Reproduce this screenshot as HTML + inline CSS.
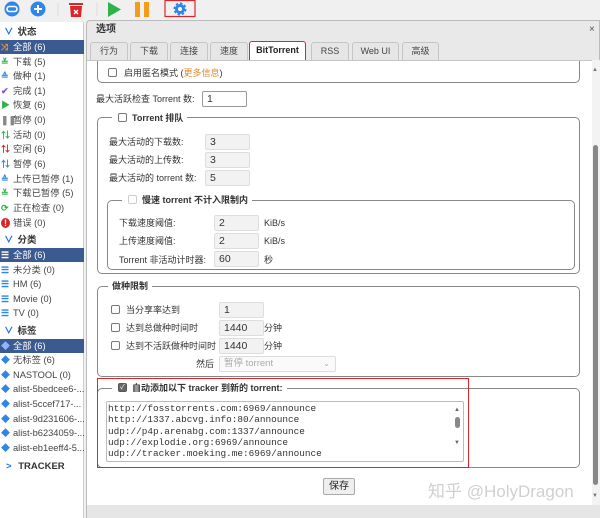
<!DOCTYPE html>
<html><head><meta charset="utf-8"><style>
*{box-sizing:border-box;margin:0;padding:0}
body{width:600px;height:518px;overflow:hidden;background:#f0f0f0;font-family:"Liberation Sans","Noto Sans CJK SC",sans-serif;font-size:9px;line-height:12px;color:#333;position:relative}
.a{position:absolute;white-space:nowrap;line-height:12px}
.sb{position:absolute;left:0;top:22px;width:84px;height:496px;background:#fff;border-right:1px solid #ccc}
.it{position:absolute;left:0;width:84px;height:14px;line-height:14px;padding-left:13px;font-size:9.3px;color:#444;overflow:hidden;white-space:nowrap}
.it.sel{background:#3b5a8f;color:#fff}
.it i{position:absolute;left:1px;top:2px;width:9px;height:10px;font-style:normal;font-size:9px;line-height:10px;font-weight:bold}
.hd{position:absolute;left:4px;font-weight:bold;font-size:9.5px;line-height:12px;color:#333}
.hd b{color:#1a73e8;margin-right:4px}
.tab{position:absolute;top:42px;height:18px;background:#e6e6e6;border:1px solid #c5c5c5;border-bottom:none;border-radius:3px 3px 0 0;text-align:center;line-height:17px;font-size:9px;color:#444}
fieldset.f{position:absolute;border:1px solid #888;border-radius:5px}
.cb{position:absolute;width:9px;height:9px;border:1px solid #777;border-radius:2px;background:#fff}
.in{position:absolute;height:16px;background:#f2f2f2;border:1px solid #ddd;border-radius:2px;padding-left:4px;line-height:14px;font-size:10.5px;color:#333;white-space:nowrap}
.lg{position:absolute;background:#fff;padding:0 4px;font-weight:bold;font-size:9px;line-height:12px;color:#333;white-space:nowrap}
</style></head><body>
<svg class="a" style="left:0;top:0" width="200" height="20">
<circle cx="12" cy="9" r="7.5" fill="#2f86e8"/><rect x="7" y="6.5" width="10" height="5" rx="2.5" fill="none" stroke="#fff" stroke-width="1.6"/>
<circle cx="38" cy="9" r="7.5" fill="#2f86e8"/><path d="M38 5v8M34 9h8" stroke="#fff" stroke-width="2"/>
<line x1="58" y1="3" x2="58" y2="16" stroke="#ddd"/>
<rect x="69" y="3" width="14" height="2" fill="#d9262b"/><path d="M70 6h12l-1 11h-10z" fill="#d9262b"/><path d="M74 10l4 4M78 10l-4 4" stroke="#fff" stroke-width="1.3"/>
<line x1="97" y1="3" x2="97" y2="16" stroke="#ddd"/>
<path d="M108 2l13 7.5-13 7.5z" fill="#2eb34a"/>
<rect x="135" y="2" width="5" height="15" fill="#f59a19"/><rect x="144" y="2" width="5" height="15" fill="#f59a19"/>
<rect x="165" y="0.5" width="30" height="16" fill="none" stroke="#d9262b" stroke-width="1.2"/>
<circle cx="180" cy="9" r="5" fill="#2f86e8" stroke="#2f86e8" stroke-width="3" stroke-dasharray="2.2 1.7"/><circle cx="180" cy="9" r="2" fill="#fff"/>
</svg>
<div class="sb"></div>
<div class="hd" style="top:27px"><b>∨</b>状态</div>
<div class="it sel" style="top:40px"><i style="color:#f59a19">⤨</i>全部 (6)</div>
<div class="it" style="top:55px"><i style="color:#2eb34a">≚</i>下载 (5)</div>
<div class="it" style="top:69px"><i style="color:#2f86e8">≙</i>做种 (1)</div>
<div class="it" style="top:84px"><i style="color:#8a4fd0">✔</i>完成 (1)</div>
<div class="it" style="top:98px"><i style="color:#2eb34a">▶</i>恢复 (6)</div>
<div class="it" style="top:113px"><i style="color:#888">❚❚</i>暂停 (0)</div>
<div class="it" style="top:128px"><i style="color:#2eb34a">⇅</i>活动 (0)</div>
<div class="it" style="top:142px"><i style="color:#d9262b">⇅</i>空闲 (6)</div>
<div class="it" style="top:157px"><i style="color:#2f86e8">⇅</i>暂停 (6)</div>
<div class="it" style="top:172px"><i style="color:#2f86e8">≙</i>上传已暂停 (1)</div>
<div class="it" style="top:186px"><i style="color:#2eb34a">≚</i>下载已暂停 (5)</div>
<div class="it" style="top:201px"><i style="color:#2eb34a">⟳</i>正在检查 (0)</div>
<div class="it" style="top:216px"><i style="color:#fff;background:#d9262b;border-radius:50%;text-align:center">!</i>错误 (0)</div>
<div class="hd" style="top:235px"><b>∨</b>分类</div>
<div class="it sel" style="top:248px"><i style="color:#fff">☰</i>全部 (6)</div>
<div class="it" style="top:263px"><i style="color:#2f86e8">☰</i>未分类 (0)</div>
<div class="it" style="top:277px"><i style="color:#2f86e8">☰</i>HM (6)</div>
<div class="it" style="top:292px"><i style="color:#2f86e8">☰</i>Movie (0)</div>
<div class="it" style="top:306px"><i style="color:#2f86e8">☰</i>TV (0)</div>
<div class="hd" style="top:326px"><b>∨</b>标签</div>
<div class="it sel" style="top:339px"><i style="color:#8fb4ff">◆</i>全部 (6)</div>
<div class="it" style="top:353px"><i style="color:#2f86e8">◆</i>无标签 (6)</div>
<div class="it" style="top:368px"><i style="color:#2f86e8">◆</i>NASTOOL (0)</div>
<div class="it" style="top:382px"><i style="color:#2f86e8">◆</i>alist-5bedcee6-...</div>
<div class="it" style="top:397px"><i style="color:#2f86e8">◆</i>alist-5ccef717-...</div>
<div class="it" style="top:412px"><i style="color:#2f86e8">◆</i>alist-9d231606-...</div>
<div class="it" style="top:426px"><i style="color:#2f86e8">◆</i>alist-b6234059-...</div>
<div class="it" style="top:441px"><i style="color:#2f86e8">◆</i>alist-eb1eeff4-5...</div>
<div class="hd" style="top:461px;left:6px"><b>&gt;</b> TRACKER</div>
<div class="a" style="left:86px;top:20px;width:514px;height:498px;background:#e9e9e9;border:1px solid #bbb;border-radius:4px 0 0 0"></div>
<div class="a" style="left:96px;top:24px;font-weight:bold;font-size:10px">选项</div>
<div class="a" style="left:589px;top:24px;font-size:10px;color:#555">×</div>
<div class="tab" style="left:90px;width:38px">行为</div>
<div class="tab" style="left:130px;width:38px">下载</div>
<div class="tab" style="left:170px;width:38px">连接</div>
<div class="tab" style="left:210px;width:38px">速度</div>
<div class="tab" style="left:249px;width:57px;background:#fff;border:1.5px solid #d9262b;font-weight:bold;color:#222;top:41px;height:20px">BitTorrent</div>
<div class="tab" style="left:311px;width:38px">RSS</div>
<div class="tab" style="left:352px;width:47px">Web UI</div>
<div class="tab" style="left:402px;width:37px">高级</div>
<div class="a" style="left:87px;top:60px;width:505px;height:445px;background:#fff;border-top:1px solid #c5c5c5"></div>
<div class="a" style="left:592px;top:60px;width:8px;height:445px;background:#f3f3f3"></div>
<div class="a" style="left:593px;top:145px;width:5px;height:340px;background:#888;border-radius:3px"></div>
<div class="a" style="left:592px;top:64px;font-size:6px;color:#777">▲</div>
<div class="a" style="left:592px;top:490px;font-size:6px;color:#777">▼</div>
<div class="a" style="left:97px;top:61px;width:483px;height:22px;border:1px solid #888;border-top:none;border-radius:0 0 5px 5px"></div>
<div class="cb" style="left:108px;top:68px"></div>
<div class="a" style="left:124px;top:67px">启用匿名模式 (<span style="color:#e08a2c">更多信息</span>)</div>
<div class="a" style="left:96px;top:93px">最大活跃检查 Torrent 数:</div>
<div class="in" style="left:202px;top:91px;width:45px;background:#fff;border-color:#999">1</div>
<fieldset class="f" style="left:97px;top:117px;width:483px;height:157px"></fieldset>
<div class="lg" style="left:112px;top:112px;padding-left:20px">Torrent 排队</div>
<div class="cb" style="left:118px;top:113px"></div>
<div class="a" style="left:109px;top:136px">最大活动的下载数:</div>
<div class="in" style="left:205px;top:134px;width:45px">3</div>
<div class="a" style="left:109px;top:154px">最大活动的上传数:</div>
<div class="in" style="left:205px;top:152px;width:45px">3</div>
<div class="a" style="left:109px;top:172px">最大活动的 torrent 数:</div>
<div class="in" style="left:205px;top:170px;width:45px">5</div>
<fieldset class="f" style="left:107px;top:200px;width:468px;height:70px"></fieldset>
<div class="lg" style="left:122px;top:194px;padding-left:20px">慢速 torrent 不计入限制内</div>
<div class="cb" style="left:128px;top:195px;border-color:#ccc"></div>
<div class="a" style="left:119px;top:217px">下载速度阈值:</div>
<div class="in" style="left:214px;top:215px;width:45px">2</div>
<div class="a" style="left:264px;top:217px">KiB/s</div>
<div class="a" style="left:119px;top:235px">上传速度阈值:</div>
<div class="in" style="left:214px;top:233px;width:45px">2</div>
<div class="a" style="left:264px;top:235px">KiB/s</div>
<div class="a" style="left:119px;top:254px">Torrent 非活动计时器:</div>
<div class="in" style="left:214px;top:251px;width:45px">60</div>
<div class="a" style="left:264px;top:254px">秒</div>
<fieldset class="f" style="left:97px;top:286px;width:483px;height:91px"></fieldset>
<div class="lg" style="left:108px;top:280px">做种限制</div>
<div class="cb" style="left:111px;top:305px"></div>
<div class="a" style="left:126px;top:304px">当分享率达到</div>
<div class="in" style="left:219px;top:302px;width:45px">1</div>
<div class="cb" style="left:111px;top:323px"></div>
<div class="a" style="left:126px;top:322px">达到总做种时间时</div>
<div class="in" style="left:219px;top:320px;width:45px">1440</div>
<div class="a" style="left:264px;top:322px">分钟</div>
<div class="cb" style="left:111px;top:341px"></div>
<div class="a" style="left:126px;top:340px">达到不活跃做种时间时</div>
<div class="in" style="left:219px;top:338px;width:45px">1440</div>
<div class="a" style="left:264px;top:340px">分钟</div>
<div class="a" style="left:196px;top:358px">然后</div>
<div class="in" style="left:219px;top:356px;width:117px;color:#aaa;background:#fafafa;font-size:9.5px">暂停 torrent<span style="position:absolute;right:5px;top:0;font-size:8px">⌄</span></div>
<fieldset class="f" style="left:97px;top:388px;width:483px;height:80px"></fieldset>
<div class="lg" style="left:112px;top:382px;padding-left:20px">自动添加以下 tracker 到新的 torrent:</div>
<div class="cb" style="left:118px;top:383px;background:#666;border-color:#555;color:#fff;font-size:7px;line-height:7px;text-align:center">✓</div>
<div class="a" style="left:106px;top:401px;width:358px;height:61px;border:1px solid #bbb;border-radius:2px;background:#fff;padding:1px 0 0 1px;font-family:'Liberation Mono',monospace;font-size:9.4px;line-height:11.3px;color:#333">http://fosstorrents.com:6969/announce<br>http://1337.abcvg.info:80/announce<br>udp://p4p.arenabg.com:1337/announce<br>udp://explodie.org:6969/announce<br>udp://tracker.moeking.me:6969/announce</div>
<div class="a" style="left:454px;top:404px;font-size:6px;color:#666">▲</div>
<div class="a" style="left:455px;top:417px;width:5px;height:11px;background:#888;border-radius:3px"></div>
<div class="a" style="left:454px;top:437px;font-size:6px;color:#666">▼</div>
<div class="a" style="left:97px;top:378px;width:372px;height:90px;border:1.5px solid #d9262b"></div>
<div class="a" style="left:323px;top:478px;width:32px;height:17px;background:#eee;border:1px solid #aaa;border-radius:2px;text-align:center;line-height:15px;font-size:10px;color:#222">保存</div>
<div class="a" style="left:428px;top:482px;font-size:17px;line-height:20px;color:#d0d0d0">知乎 @HolyDragon</div>
<div class="a" style="left:87px;top:505px;width:513px;height:13px;background:#e6e6e6"></div>
</body></html>
